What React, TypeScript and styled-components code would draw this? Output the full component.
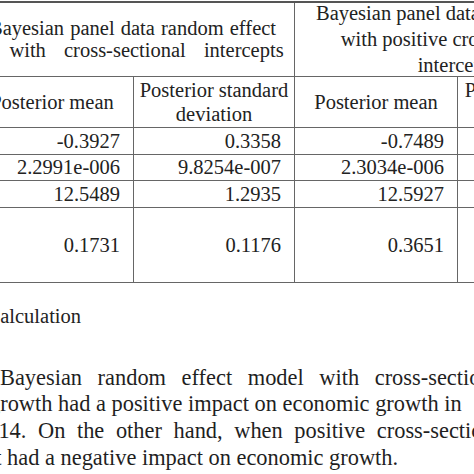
import styled, { createGlobalStyle } from 'styled-components';

const GlobalStyle = createGlobalStyle`
	html, body {
		margin: 0;
		padding: 0;
		background: #fff;
	}
	body {
		font-family: "Liberation Serif", "Times New Roman", serif;
		color: #1f1f1f;
	}
`;

const Page = styled.div`
	width: 474px;
	height: 474px;
	overflow: hidden;
	background: #fff;
	padding-top: 1px;
	box-sizing: border-box;
`;

// the picture is a crop of a wider page; the label column lies left of the frame
const Sheet = styled.div`
	margin-left: -30px;
	width: 720px;
`;

const Table = styled.table`
	border-collapse: collapse;
	table-layout: fixed;
	width: 650px;
	font-size: 20.5px;
	color: #222;
	border-top: 2px solid #555;
`;

const Row = styled.tr<{ $h: number }>`
	height: ${({ $h }) => $h}px;
`;

const HeadCell = styled.th`
	font-weight: normal;
	text-align: center;
	vertical-align: middle;
	line-height: 24px;
	padding: 0;
	border: 1px solid #666;
	border-top: none;
`;

// lines of a header; $pull lets wide leading spill over the cell edge like the print does
const HeadStack = styled.div<{ $lh: number; $pull?: number }>`
	line-height: ${({ $lh }) => $lh}px;
	margin: ${({ $pull = 0 }) => -$pull}px 0;
`;

const HeadLine = styled.span<{ $spread?: number; $shift?: number }>`
	display: block;
	white-space: nowrap;
	word-spacing: ${({ $spread = 0 }) => $spread}px;
	padding-left: ${({ $shift = 0 }) => $shift}px;
`;

const NumCell = styled.td`
	text-align: right;
	vertical-align: middle;
	line-height: 22px;
	padding: 0 13px 0 0;
	border: 1px solid #666;
	white-space: nowrap;
`;

const Note = styled.p`
	margin: 21px 0 0 -122px;
	font-size: 20.5px;
	line-height: 24px;
	color: #222;
	white-space: nowrap;
`;

const Body = styled.div`
	margin-top: 37px;
	font-size: 22.4px;
	line-height: 26.9px;
	color: #1f1f1f;
`;

const BodyLine = styled.div<{ $indent: number; $spread?: number }>`
	white-space: nowrap;
	margin-left: ${({ $indent }) => $indent}px;
	word-spacing: ${({ $spread = 0 }) => $spread}px;
`;

const rows = [
	{ h: 27, cells: ['-0.3927', '0.3358', '-0.7489', '0.3371'] },
	{ h: 26, cells: ['2.2991e-006', '9.8254e-007', '2.3034e-006', '9.8712e-007'] },
	{ h: 27, cells: ['12.5489', '1.2935', '12.5927', '1.3018'] },
	{ h: 75, cells: ['0.1731', '0.1176', '0.3651', '0.1224'] },
];

export default function App() {
	return (
		<>
			<GlobalStyle />
			<Page>
				<Sheet>
					<Table>
						<colgroup>
							<col style={{ width: 163 }} />
							<col style={{ width: 161 }} />
							<col style={{ width: 163 }} />
							<col style={{ width: 163 }} />
						</colgroup>
						<thead>
							<Row $h={74}>
								<HeadCell colSpan={2}>
									<HeadStack $lh={22}>
										<HeadLine $spread={1}>Bayesian panel data random effect</HeadLine>
										<HeadLine $spread={13} $shift={28}>
											with cross-sectional intercepts
										</HeadLine>
									</HeadStack>
								</HeadCell>
								<HeadCell colSpan={2}>
									<HeadStack $lh={26} $pull={4}>
										<HeadLine>Bayesian panel data random effect</HeadLine>
										<HeadLine>with positive cross-sectional</HeadLine>
										<HeadLine>intercepts</HeadLine>
									</HeadStack>
								</HeadCell>
							</Row>
							<Row $h={51}>
								<HeadCell>Posterior mean</HeadCell>
								<HeadCell>
									<HeadLine>Posterior standard</HeadLine>
									<HeadLine>deviation</HeadLine>
								</HeadCell>
								<HeadCell>Posterior mean</HeadCell>
								<HeadCell>
									<HeadLine>Posterior standard</HeadLine>
									<HeadLine>deviation</HeadLine>
								</HeadCell>
							</Row>
						</thead>
						<tbody>
							{rows.map((r, i) => (
								<Row key={i} $h={r.h}>
									{r.cells.map((c, j) => (
										<NumCell key={j}>{c}</NumCell>
									))}
								</Row>
							))}
						</tbody>
					</Table>
					<Note>Source: Authors’ calculation</Note>
					<Body>
						<BodyLine $indent={-13} $spread={10}>
							the Bayesian random effect model with cross-sectional
						</BodyLine>
						<BodyLine $indent={19}>growth had a positive impact on economic growth in</BodyLine>
						<BodyLine $indent={6} $spread={6}>
							2014. On the other hand, when positive cross-sectional
						</BodyLine>
						<BodyLine $indent={19}>it had a negative impact on economic growth.</BodyLine>
					</Body>
				</Sheet>
			</Page>
		</>
	);
}
